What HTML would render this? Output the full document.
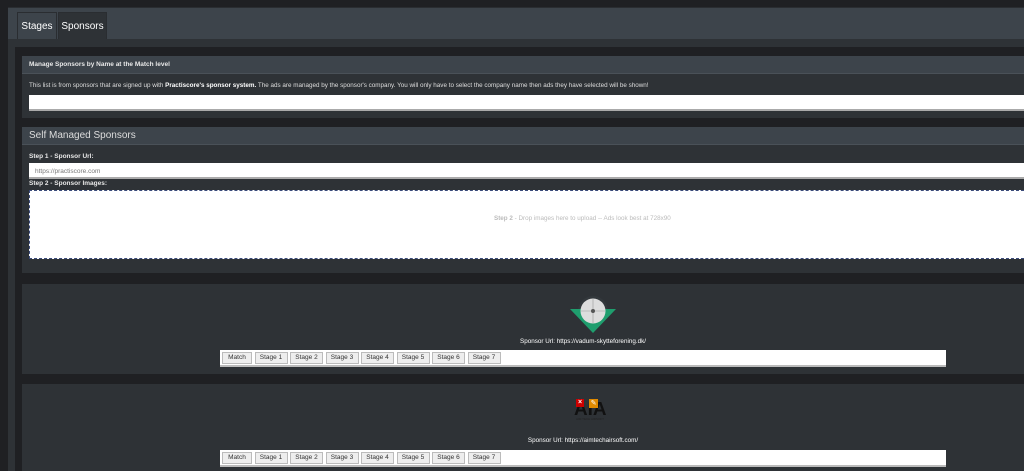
<!DOCTYPE html>
<html><head><meta charset="utf-8"><style>
*{box-sizing:border-box;margin:0;padding:0}
body{width:1024px;height:471px;overflow:hidden;background:#1f2023;font-family:"Liberation Sans",Arial,sans-serif;color:#fff;position:relative}
.abs{position:absolute}
.tabbar{left:8px;top:7px;width:1016px;height:32px;background:#3d444b;border-top:1px solid #2a2d31}
.tab{top:12px;height:27px;font-size:10px;padding-top:8px;text-align:center;border:1px solid #2a2d31;border-bottom:none}
.strip{left:8px;top:39px;width:1016px;height:8px;background:#2e3236}
.sideL{left:8px;top:47px;width:7px;height:424px;background:#2e3236}
.ph{background:#3d444b;border-bottom:1px solid #4a5158}
.pb{background:#2e3236}
.lbl{font-size:6.5px;font-weight:bold;color:#e8e8e8}
.inp{background:#fff;border-bottom:2px solid #aaa}
.btns{background:#fff;border-bottom:2px solid #bbb;padding:2px 2px}
.btn{display:inline-block;height:12px;border:1px solid #bbb;background:#eee;color:#333;font-size:6.5px;line-height:10px;text-align:center;margin-right:2.5px;vertical-align:top}
</style></head><body>
<div class="abs tabbar"></div>
<div class="abs tab" style="left:17px;width:40px;background:#3d444b">Stages</div>
<div class="abs tab" style="left:58px;width:49px;background:#2e3236">Sponsors</div>
<div class="abs strip"></div>
<div class="abs sideL"></div>

<div class="abs ph" style="left:22px;top:56px;width:1002px;height:18px"><div class="lbl" style="position:absolute;left:7px;top:5px">Manage Sponsors by Name at the Match level</div></div>
<div class="abs pb" style="left:22px;top:74px;width:1002px;height:44px">
 <div style="position:absolute;left:7px;top:8px;font-size:6.3px;color:#ddd;white-space:nowrap">This list is from sponsors that are signed up with <b style="color:#fff">Practiscore's sponsor system.</b> The ads are managed by the sponsor's company. You will only have to select the company name then ads they have selected will be shown!</div>
 <div class="inp" style="position:absolute;left:7px;top:21px;width:995px;height:16px"></div>
</div>

<div class="abs ph" style="left:22px;top:127px;width:1002px;height:18px"><div style="position:absolute;left:7px;top:3px;font-size:10px;color:#ddd">Self Managed Sponsors</div></div>
<div class="abs pb" style="left:22px;top:145px;width:1002px;height:128px">
 <div class="lbl" style="position:absolute;left:7px;top:8px">Step 1 - Sponsor Url:</div>
 <div class="inp" style="position:absolute;left:7px;top:18px;width:995px;height:16px;font-size:6.5px;color:#777;padding:5px 0 0 6px">https://practiscore.com</div>
 <div class="lbl" style="position:absolute;left:7px;top:35px">Step 2 - Sponsor Images:</div>
 <div style="position:absolute;left:7px;top:45px;width:1000px;height:69px;background:#fff;border:1px dashed #3a4a7a;font-size:6.3px;color:#bbb;padding:24px 0 0 464px;white-space:nowrap"><b style="color:#bbb">Step 2</b> - Drop images here to upload -- Ads look best at 728x90</div>
</div>

<div class="abs pb" style="left:22px;top:284px;width:1002px;height:90px"></div>
<svg class="abs" style="left:566px;top:293px" width="56" height="42">
 <circle cx="27" cy="18" r="15" fill="#33383c"/>
 <polygon points="4,16 50,16 27,40" fill="#1f9e6e"/>
 <circle cx="27" cy="18" r="12.5" fill="#ddd"/>
 <line x1="15" y1="18" x2="39" y2="18" stroke="#999" stroke-width=".6"/>
 <line x1="27" y1="6" x2="27" y2="30" stroke="#999" stroke-width=".6"/>
 <circle cx="27" cy="18" r="2" fill="#555"/>
</svg>
<div class="abs" style="left:490px;top:338px;width:186px;text-align:center;font-size:6.3px;color:#fff">Sponsor Url: https://vadum-skytteforening.dk/</div>
<div class="abs btns" style="left:220px;top:350px;width:726px;height:17px">
<span class="btn" style="width:30px">Match</span><span class="btn" style="width:33px">Stage 1</span><span class="btn" style="width:33px">Stage 2</span><span class="btn" style="width:33px">Stage 3</span><span class="btn" style="width:33px">Stage 4</span><span class="btn" style="width:33px">Stage 5</span><span class="btn" style="width:33px">Stage 6</span><span class="btn" style="width:33px">Stage 7</span>
</div>

<div class="abs pb" style="left:22px;top:384px;width:1002px;height:87px"></div>
<div class="abs" style="left:574px;top:400px;font-size:18px;font-weight:bold;color:#111;line-height:18px;transform:scaleX(1.05);transform-origin:left">AIA</div>
<div class="abs" style="left:576px;top:417px;font-size:3px;color:#222">AIM TECH AIRSOFT</div>
<div class="abs" style="left:576px;top:399px;width:8px;height:8px;background:#c00;color:#fff;font-size:7px;line-height:8px;text-align:center;font-weight:bold">×</div>
<div class="abs" style="left:589px;top:399px;width:9px;height:9px;background:#e08a00;color:#fff;font-size:7px;line-height:9px;text-align:center">✎</div>
<div class="abs" style="left:500px;top:437px;width:166px;text-align:center;font-size:6.3px;color:#fff">Sponsor Url: https://aimtechairsoft.com/</div>
<div class="abs btns" style="left:220px;top:450px;width:726px;height:17px">
<span class="btn" style="width:30px">Match</span><span class="btn" style="width:33px">Stage 1</span><span class="btn" style="width:33px">Stage 2</span><span class="btn" style="width:33px">Stage 3</span><span class="btn" style="width:33px">Stage 4</span><span class="btn" style="width:33px">Stage 5</span><span class="btn" style="width:33px">Stage 6</span><span class="btn" style="width:33px">Stage 7</span>
</div>
</body></html>
